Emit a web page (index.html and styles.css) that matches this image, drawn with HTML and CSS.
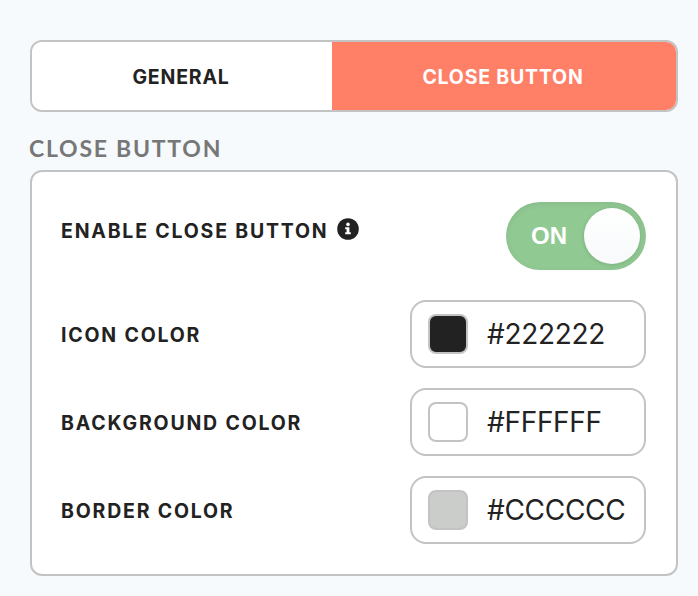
FILE: index.html
```html
<!DOCTYPE html>
<html lang="en">
<head>
    <meta charset="UTF-8">
    <meta name="viewport" content="width=device-width, initial-scale=1.0">
    <title>Close Button Settings</title>
    <link rel="stylesheet" href="styles.css">
</head>
<body>
    <div class="tabs">
        <button type="button" class="tab">General</button>
        <button type="button" class="tab active">Close Button</button>
    </div>

    <h2 class="section-title">Close Button</h2>

    <div class="panel">
        <div class="row toggle-row">
            <span class="label">Enable Close Button</span>
            <svg class="info-icon" viewBox="0 0 22 22">
                <circle cx="11" cy="11" r="10.8" fill="#222"/>
                <circle cx="11" cy="6.4" r="1.8" fill="#fff"/>
                <path d="M8.2 9.2h4.2v5h1.4v2H8.2v-2h1.4v-3H8.2z" fill="#fff"/>
            </svg>
            <div class="toggle">
                <span class="toggle-text">ON</span>
                <span class="knob"></span>
            </div>
        </div>

        <div class="row">
            <span class="label">Icon Color</span>
            <div class="color-input">
                <span class="swatch dark"></span>
                <span class="hex">#222222</span>
            </div>
        </div>

        <div class="row">
            <span class="label">Background Color</span>
            <div class="color-input">
                <span class="swatch white"></span>
                <span class="hex">#FFFFFF</span>
            </div>
        </div>

        <div class="row">
            <span class="label">Border Color</span>
            <div class="color-input">
                <span class="swatch gray"></span>
                <span class="hex">#CCCCCC</span>
            </div>
        </div>
    </div>
</body>
</html>
```
FILE: styles.css
```css
* {
    margin: 0;
    padding: 0;
    box-sizing: border-box;
}

body {
    font-family: Inter, "Liberation Sans", sans-serif;
    background: #f6fafc;
    color: #222;
    padding: 40px 20px 20px 30px;
}

.tabs {
    display: flex;
    height: 72px;
    border: 2px solid #c3c3c3;
    border-radius: 12px;
    background: white;
    overflow: hidden;
}

.tab {
    width: 300px;
    padding: 2px 2px 0 0;
    border: none;
    background: white;
    color: #222;
    font-family: inherit;
    font-size: 19.5px;
    font-weight: 700;
    letter-spacing: 0.8px;
    text-transform: uppercase;
    cursor: pointer;
}

.tab.active {
    flex: 1;
    background: #ff8066;
    color: white;
}

.section-title {
    height: 58px;
    padding-top: 21px;
    margin-left: -1px;
    color: #777;
    font-family: Lato, sans-serif;
    font-size: 23px;
    font-weight: 700;
    line-height: 30px;
    letter-spacing: 1.75px;
    text-transform: uppercase;
}

.panel {
    display: flex;
    flex-direction: column;
    gap: 20px;
    height: 406px;
    padding: 30px 30px 0 29px;
    border: 2px solid #c3c3c3;
    border-radius: 12px;
    background: white;
}

.row {
    display: flex;
    align-items: center;
    justify-content: space-between;
    height: 68px;
}

.toggle-row {
    align-items: flex-start;
    justify-content: flex-start;
    margin-bottom: 10px;
}

.label {
    padding-top: 2px;
    font-size: 19.5px;
    font-weight: 650;
    line-height: 24px;
    letter-spacing: 1.8px;
    text-transform: uppercase;
}

.toggle-row .label {
    margin-top: 15px;
}

.info-icon {
    width: 22px;
    height: 22px;
    margin: 16px 0 0 8px;
}

.toggle {
    display: flex;
    align-items: center;
    justify-content: space-between;
    width: 140px;
    height: 68px;
    margin-left: auto;
    padding: 0 6px 0 25px;
    border-radius: 34px;
    background: #91c993;
    box-shadow: inset 0 2px 6px rgba(0,0,0,0.07);
}

.toggle-text {
    color: white;
    font-family: "Liberation Sans", sans-serif;
    font-size: 24px;
    font-weight: 700;
}

.knob {
    width: 56px;
    height: 56px;
    border-radius: 50%;
    background: linear-gradient(#fff, #f7f9fa);
    box-shadow: 0 1px 4px rgba(0,0,0,0.15);
}

.color-input {
    display: flex;
    align-items: center;
    gap: 19px;
    width: 236px;
    height: 68px;
    padding-left: 16px;
    border: 2px solid #c3c3c3;
    border-radius: 16px;
}

.swatch {
    width: 40px;
    height: 40px;
    border: 2px solid #c3c3c3;
    border-radius: 8px;
}

.swatch.dark {
    background: #222;
}

.swatch.white {
    background: #fff;
}

.swatch.gray {
    background: #cbcdcb;
}

.hex {
    font-size: 28px;
    letter-spacing: -0.3px;
}
```
